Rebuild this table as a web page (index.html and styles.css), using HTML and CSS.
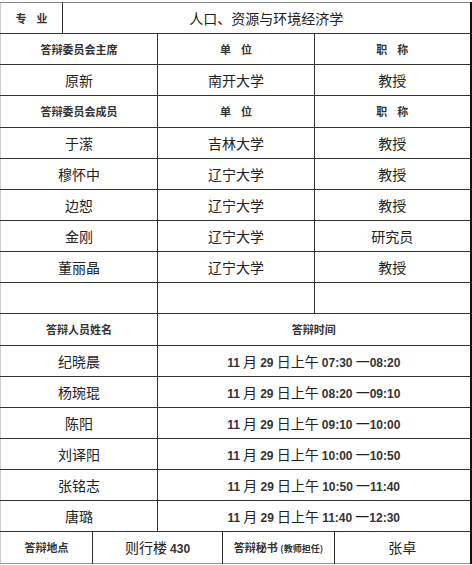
FILE: index.html
```html
<!DOCTYPE html>
<html lang="zh-CN">
<head>
<meta charset="utf-8">
<title>答辩安排</title>
<link rel="stylesheet" href="styles.css">
</head>
<body>
<table class="sheet">
  <colgroup>
    <col class="c1"><col class="c2"><col class="c3"><col class="c4"><col class="c5"><col class="c6"><col class="c7">
  </colgroup>
  <tbody>
    <tr>
      <td class="hd">专&nbsp;&nbsp;&nbsp;&nbsp;业</td>
      <td colspan="6" class="tx">人口、资源与环境经济学</td>
    </tr>
    <tr>
      <td colspan="3" class="hd">答辩委员会主席</td>
      <td colspan="2" class="hd">单&nbsp;&nbsp;&nbsp;&nbsp;位</td>
      <td colspan="2" class="hd">职&nbsp;&nbsp;&nbsp;&nbsp;称</td>
    </tr>
    <tr>
      <td colspan="3" class="tx">原新</td>
      <td colspan="2" class="tx">南开大学</td>
      <td colspan="2" class="tx">教授</td>
    </tr>
    <tr>
      <td colspan="3" class="hd">答辩委员会成员</td>
      <td colspan="2" class="hd">单&nbsp;&nbsp;&nbsp;&nbsp;位</td>
      <td colspan="2" class="hd">职&nbsp;&nbsp;&nbsp;&nbsp;称</td>
    </tr>
    <tr>
      <td colspan="3" class="tx">于潆</td>
      <td colspan="2" class="tx">吉林大学</td>
      <td colspan="2" class="tx">教授</td>
    </tr>
    <tr>
      <td colspan="3" class="tx">穆怀中</td>
      <td colspan="2" class="tx">辽宁大学</td>
      <td colspan="2" class="tx">教授</td>
    </tr>
    <tr>
      <td colspan="3" class="tx">边恕</td>
      <td colspan="2" class="tx">辽宁大学</td>
      <td colspan="2" class="tx">教授</td>
    </tr>
    <tr>
      <td colspan="3" class="tx">金刚</td>
      <td colspan="2" class="tx">辽宁大学</td>
      <td colspan="2" class="tx">研究员</td>
    </tr>
    <tr>
      <td colspan="3" class="tx">董丽晶</td>
      <td colspan="2" class="tx">辽宁大学</td>
      <td colspan="2" class="tx">教授</td>
    </tr>
    <tr>
      <td colspan="3" class="tx"></td>
      <td colspan="2" class="tx"></td>
      <td colspan="2" class="tx"></td>
    </tr>
    <tr>
      <td colspan="3" class="hd">答辩人员姓名</td>
      <td colspan="4" class="hd">答辩时间</td>
    </tr>
    <tr>
      <td colspan="3" class="tx">纪晓晨</td>
      <td colspan="4" class="tm"><b>11</b> 月 <b>29</b> 日上午 <b>07:30</b> 一<b>08:20</b></td>
    </tr>
    <tr>
      <td colspan="3" class="tx">杨琬琨</td>
      <td colspan="4" class="tm"><b>11</b> 月 <b>29</b> 日上午 <b>08:20</b> 一<b>09:10</b></td>
    </tr>
    <tr>
      <td colspan="3" class="tx">陈阳</td>
      <td colspan="4" class="tm"><b>11</b> 月 <b>29</b> 日上午 <b>09:10</b> 一<b>10:00</b></td>
    </tr>
    <tr>
      <td colspan="3" class="tx">刘译阳</td>
      <td colspan="4" class="tm"><b>11</b> 月 <b>29</b> 日上午 <b>10:00</b> 一<b>10:50</b></td>
    </tr>
    <tr>
      <td colspan="3" class="tx">张铭志</td>
      <td colspan="4" class="tm"><b>11</b> 月 <b>29</b> 日上午 <b>10:50</b> 一<b>11:40</b></td>
    </tr>
    <tr>
      <td colspan="3" class="tx">唐璐</td>
      <td colspan="4" class="tm"><b>11</b> 月 <b>29</b> 日上午 <b>11:40</b> 一<b>12:30</b></td>
    </tr>
    <tr>
      <td colspan="2" class="hd">答辩地点</td>
      <td colspan="2" class="tx">则行楼 <b class="num">430</b></td>
      <td colspan="2" class="hd">答辩秘书 <span class="small">(教师担任)</span></td>
      <td class="tx">张卓</td>
    </tr>
  </tbody>
</table>
</body>
</html>
```

FILE: styles.css
```css
html, body {
  margin: 0;
  padding: 0;
  background: #ffffff;
}

body {
  padding-top: 2px;
  font-family: "Noto Sans CJK SC", "Noto Sans", sans-serif;
  color: #222;
}

.sheet {
  border-collapse: collapse;
  table-layout: fixed;
  width: 471px;
  border-top: 1px solid #888;
  border-left: 1px solid #ccc;
  border-right: 2px solid #111;
  border-bottom: 1px solid #999;
}

.c1 { width: 62px; }
.c2 { width: 30px; }
.c3 { width: 65px; }
.c4 { width: 65px; }
.c5 { width: 92px; }
.c6 { width: 20px; }
.c7 { width: 136px; }

.sheet td {
  height: 30.15px;
  padding: 0;
  border: 1px solid #333;
  text-align: center;
  vertical-align: middle;
  white-space: nowrap;
  overflow: hidden;
}

.sheet tr:first-child td {
  border-top: none;
}

.sheet tr:last-child td {
  border-bottom: none;
}

.sheet td:first-child {
  border-left: none;
}

.hd {
  font-size: 11px;
  font-weight: 700;
  color: #333;
}

.tx {
  font-size: 14px;
  color: #222;
}

.tm {
  font-size: 14px;
  color: #222;
}

.tm b, .num {
  font-family: "Liberation Sans", "Open Sans", sans-serif;
  font-weight: 700;
  font-size: 12px;
  color: #333;
}

.small {
  font-size: 9px;
  font-weight: 700;
}
```
